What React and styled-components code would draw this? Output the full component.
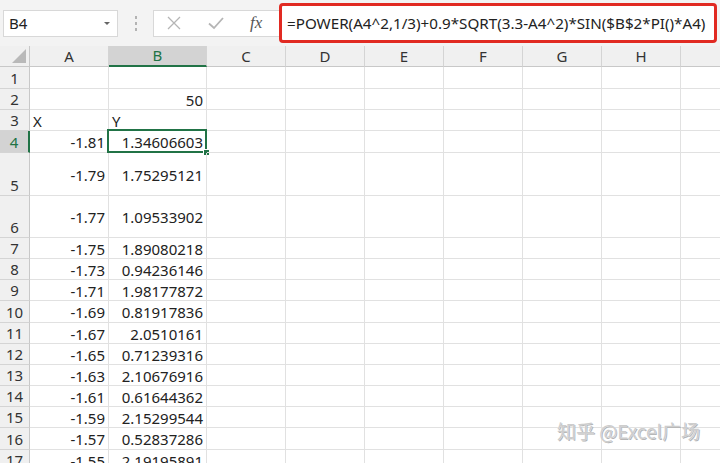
import React from "react";
import styled, { createGlobalStyle } from "styled-components";

const Global = createGlobalStyle`
  html, body { margin: 0; padding: 0; background: #fff; overflow: hidden; }
  body { font-family: "Noto Sans", "Noto Sans CJK SC", sans-serif; }
`;

const Page = styled.div`
  width: 720px;
  height: 463px;
  position: relative;
  overflow: hidden;
  background: #fff;
`;

const Toolbar = styled.div`
  height: 46px;
  background: #f3f3f3;
  display: flex;
  align-items: center;
  box-sizing: border-box;
  padding-left: 3px;
`;

const NameBox = styled.div`
  width: 115px;
  height: 27px;
  box-sizing: border-box;
  background: #fff;
  border: 1px solid #d8d8d8;
  display: flex;
  align-items: center;
  justify-content: space-between;
  padding: 0 7px 0 5px;
  font-size: 15px;
  color: #222;
`;

const Caret = styled.span`
  width: 0;
  height: 0;
  border-left: 3px solid transparent;
  border-right: 3px solid transparent;
  border-top: 3px solid #666;
`;

const Dots = styled.div`
  width: 35px;
  display: flex;
  flex-direction: column;
  align-items: center;
  gap: 3px;
  & span {
    width: 2px;
    height: 3px;
    background: #b3b3b3;
  }
`;

const FormulaArea = styled.div`
  flex: 1;
  display: flex;
  align-items: center;
  height: 27px;
  margin-right: 3px;
  position: relative;
`;

const ButtonBox = styled.div`
  width: 130px;
  height: 27px;
  box-sizing: border-box;
  background: #fff;
  border: 1px solid #d8d8d8;
  border-right: none;
  display: flex;
  align-items: center;
  padding-left: 12px;
  gap: 25px;
`;

const Fx = styled.span`
  font-family: "Liberation Serif", serif;
  font-style: italic;
  font-size: 17px;
  color: #555;
`;

const FormulaInput = styled.div`
  flex: 1;
  height: 40px;
  box-sizing: border-box;
  border: 3px solid #e12a22;
  border-radius: 4px;
  background: #fff;
  display: flex;
  align-items: center;
  padding-left: 5px;
  margin-left: -4px;
  font-size: 15.2px;
  color: #222;
  white-space: nowrap;
  overflow: hidden;
`;

const Sheet = styled.div`
  display: grid;
  grid-template-columns: 30px 79px 98px 79px 79px 79px 79px 79px 79px 79px;
`;

const Corner = styled.div`
  height: 21px;
  background: #f0f0f0;
  border-right: 1px solid #c8c8c8;
  border-bottom: 1px solid #c8c8c8;
  box-sizing: border-box;
  position: relative;
  &::after {
    content: "";
    position: absolute;
    right: 3px;
    bottom: 3px;
    width: 0;
    height: 0;
    border-left: 14px solid transparent;
    border-bottom: 14px solid #b9b9b9;
  }
`;

const ColHead = styled.div`
  height: 21px;
  box-sizing: border-box;
  background: ${(p) => (p.$sel ? "#d3d3d3" : "#f0f0f0")};
  border-right: 1px solid #d4d4d4;
  border-bottom: ${(p) => (p.$sel ? "2px solid #217346" : "1px solid #c8c8c8")};
  color: ${(p) => (p.$sel ? "#217346" : "#333")};
  font-size: 15px;
  display: flex;
  align-items: center;
  justify-content: center;
  line-height: 1;
`;

const RowHead = styled.div`
  height: ${(p) => p.$h}px;
  box-sizing: border-box;
  background: ${(p) => (p.$sel ? "#d3d3d3" : "#f0f0f0")};
  border-right: ${(p) => (p.$sel ? "2px solid #217346" : "1px solid #c8c8c8")};
  border-bottom: 1px solid #d4d4d4;
  color: ${(p) => (p.$sel ? "#217346" : "#333")};
  font-size: 15px;
  display: flex;
  align-items: flex-end;
  justify-content: center;
  padding-bottom: 1px;
  line-height: 1.2;
`;

const Cell = styled.div`
  height: ${(p) => p.$h}px;
  box-sizing: border-box;
  border-right: 1px solid #e1e1e1;
  border-bottom: 1px solid #e1e1e1;
  font-size: 15px;
  color: #222;
  display: flex;
  align-items: center;
  justify-content: ${(p) => (p.$left ? "flex-start" : "flex-end")};
  padding: 2px 3px 0;
  white-space: nowrap;
  position: relative;
  line-height: 1;
  ${(p) =>
    p.$sel &&
    `
    &::before {
      content: "";
      position: absolute;
      left: -2px; top: -2px; right: -1px; bottom: -1px;
      border: 2px solid #217346;
      pointer-events: none;
    }
    &::after {
      content: "";
      position: absolute;
      right: -4px; bottom: -4px;
      width: 5px; height: 5px;
      background: #217346;
      border: 1px solid #fff;
    }
  `}
`;

const Watermark = styled.div`
  position: absolute;
  right: 20px;
  bottom: 19px;
  font-family: "Noto Sans CJK SC", "Noto Sans", sans-serif;
  font-size: 19px;
  color: #cdcdcd;
  text-shadow: 0 0 1px #fff, 1px 1px 0 #b0b0b0;
  white-space: nowrap;
`;

const cols = ["A", "B", "C", "D", "E", "F", "G", "H", ""];
const heights = [22, 21, 21, 22, 43, 42, 21, 21, 21, 22, 21, 21, 21, 21, 21, 22, 21];
const data = {
  2: ["", "50"],
  3: ["X", "Y"],
  4: ["-1.81", "1.34606603"],
  5: ["-1.79", "1.75295121"],
  6: ["-1.77", "1.09533902"],
  7: ["-1.75", "1.89080218"],
  8: ["-1.73", "0.94236146"],
  9: ["-1.71", "1.98177872"],
  10: ["-1.69", "0.81917836"],
  11: ["-1.67", "2.0510161"],
  12: ["-1.65", "0.71239316"],
  13: ["-1.63", "2.10676916"],
  14: ["-1.61", "0.61644362"],
  15: ["-1.59", "2.15299544"],
  16: ["-1.57", "0.52837286"],
  17: ["-1.55", "2.19195891"],
};

function CancelIcon() {
  return (
    <svg width="16" height="16" viewBox="0 0 16 16">
      <path d="M2 2 L14 14 M14 2 L2 14" stroke="#b5b5b5" strokeWidth="1.3" fill="none" />
    </svg>
  );
}

function CheckIcon() {
  return (
    <svg width="18" height="16" viewBox="0 0 18 16">
      <path d="M2 8.5 L7 13 L16 3" stroke="#b5b5b5" strokeWidth="1.8" fill="none" />
    </svg>
  );
}

export default function App() {
  return (
    <Page>
      <Global />
      <Toolbar>
        <NameBox>
          <span>B4</span>
          <Caret />
        </NameBox>
        <Dots>
          <span />
          <span />
          <span />
        </Dots>
        <FormulaArea>
          <ButtonBox>
            <CancelIcon />
            <CheckIcon />
            <Fx>fx</Fx>
          </ButtonBox>
          <FormulaInput>=POWER(A4^2,1/3)+0.9*SQRT(3.3-A4^2)*SIN($B$2*PI()*A4)</FormulaInput>
        </FormulaArea>
      </Toolbar>
      <Sheet>
        <Corner />
        {cols.map((c, i) => (
          <ColHead key={i} $sel={c === "B"}>
            {c}
          </ColHead>
        ))}
        {heights.map((h, i) => {
          const r = i + 1;
          const row = data[r] || ["", ""];
          return (
            <React.Fragment key={r}>
              <RowHead $h={h} $sel={r === 4}>
                {r}
              </RowHead>
              <Cell $h={h} $left={r === 3}>
                {row[0]}
              </Cell>
              <Cell $h={h} $left={r === 3} $sel={r === 4}>
                {row[1]}
              </Cell>
              {cols.slice(2).map((c, j) => (
                <Cell key={j} $h={h} />
              ))}
            </React.Fragment>
          );
        })}
      </Sheet>
      <Watermark>知乎 @Excel广场</Watermark>
    </Page>
  );
}
